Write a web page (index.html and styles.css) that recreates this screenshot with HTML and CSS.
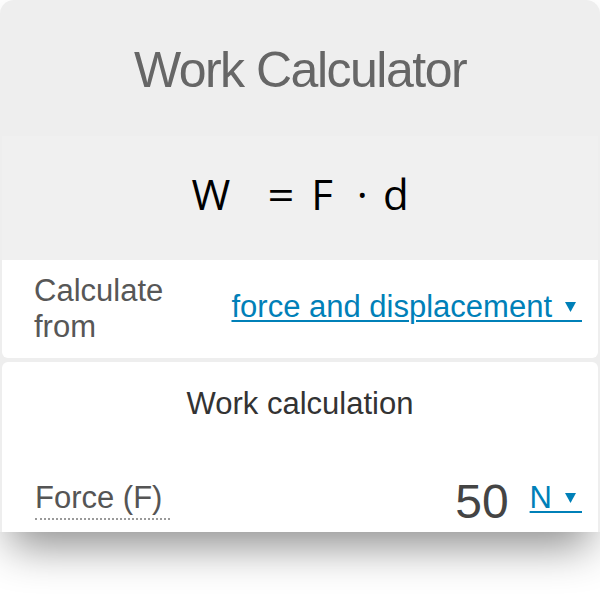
FILE: index.html
```html
<!DOCTYPE html>
<html>
<head>
<meta charset="utf-8">
<link rel="stylesheet" href="styles.css">
</head>
<body>
<div class="widget">
  <div class="header">Work Calculator</div>
  <div class="formula">
    <span class="sym">W</span><span class="sym eq">=</span><span class="sym">F</span><span class="sym dot">·</span><span class="sym">d</span>
  </div>
  <div class="card card-top">
    <div class="calc-label">Calculate from</div>
    <a class="select"><span class="select-text">force and displacement</span><span class="caret"><svg width="11" height="10" viewBox="0 0 11 10"><path d="M0 0H11L5.5 10Z" fill="#0080b8"/></svg></span></a>
  </div>
  <div class="card card-main">
    <div class="section-title">Work calculation</div>
    <div class="row">
      <div class="field-label">Force (F)</div>
      <div class="value">50</div>
      <a class="select unit"><span class="select-text">N</span><span class="caret"><svg width="11" height="10" viewBox="0 0 11 10"><path d="M0 0H11L5.5 10Z" fill="#0080b8"/></svg></span></a>
    </div>
  </div>
</div>
</body>
</html>
```
FILE: styles.css
```css
* { box-sizing: border-box; }
html, body { margin: 0; padding: 0; background: #ffffff; }
body {
  font-family: "Liberation Sans", Arial, sans-serif;
  height: 600px;
}

.widget {
  width: 600px;
  height: 532px;
  overflow: hidden;
  background: #eeeeee;
  border-radius: 14px 14px 0 0;
  box-shadow: 0 24px 44px -10px rgba(0, 0, 0, 0.45);
  display: flex;
  flex-direction: column;
}

.header {
  height: 136px;
  flex: none;
  padding-top: 45px;
  text-align: center;
  font-size: 50px;
  line-height: 50px;
  letter-spacing: -1.5px;
  color: #666666;
}

.formula {
  height: 124px;
  flex: none;
  margin: 0 2px;
  background: #f0f0f0;
  padding-top: 37px;
  display: flex;
  justify-content: center;
  align-items: baseline;
  font-family: "Open Sans", "Noto Sans", sans-serif;
  font-size: 42px;
  line-height: 42px;
  color: #000;
}
.formula .eq { margin-left: 39px; margin-right: 18px; transform: scaleX(1.12); }
.formula .dot { margin: 0 15px 0 24px; }

.card {
  background: #ffffff;
  margin: 0 2px;
}
.card-top {
  height: 98px;
  flex: none;
  border-radius: 0 0 6px 6px;
  display: flex;
  align-items: center;
  justify-content: space-between;
  padding: 0 16px 0 32px;
}
.calc-label {
  width: 150px;
  font-size: 31px;
  line-height: 36px;
  color: #575757;
}
.select {
  display: block;
  white-space: nowrap;
  color: #0080b8;
  font-size: 31px;
  line-height: 36px;
  margin-top: -4px;
}
.select-text {
  text-decoration: underline;
  text-decoration-thickness: 2px;
  text-underline-offset: 3px;
}
.caret {
  display: inline-block;
  vertical-align: baseline;
  padding: 0 6px 8px 13px;
  margin-bottom: -5px;
  border-bottom: 2px solid #0080b8;
}
.caret svg { display: block; }

.card-main {
  margin-top: 4px;
  flex: 1;
  border-radius: 6px 6px 0 0;
  padding: 24px 16px 0 16px;
}
.section-title {
  text-align: center;
  font-size: 31px;
  line-height: 36px;
  color: #333333;
}
.row {
  margin-top: 58px;
  padding-left: 17px;
  display: flex;
  align-items: flex-start;
}
.field-label {
  font-size: 31px;
  line-height: 36px;
  color: #555555;
  padding-bottom: 2px;
  border-bottom: 2px dotted #9a9a9a;
  padding-right: 8px;
  margin-right: auto;
}
.value {
  font-size: 48px;
  line-height: 44px;
  color: #444444;
  margin-right: 21px;
}
.unit { margin-top: 0; }
```
